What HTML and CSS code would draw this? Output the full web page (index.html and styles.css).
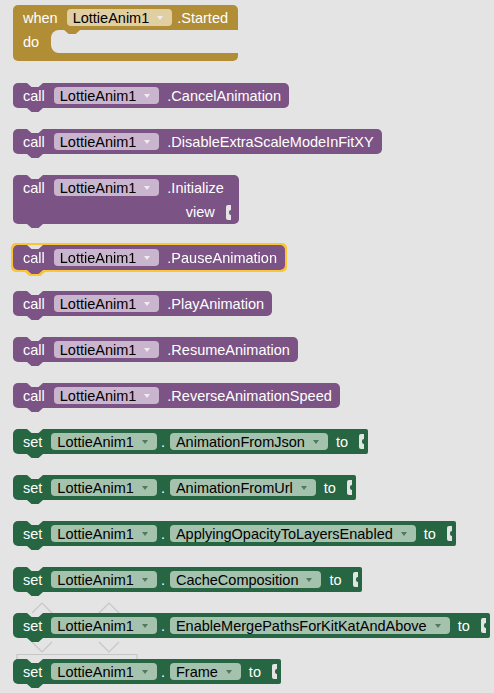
FILE: index.html
```html
<!DOCTYPE html>
<html>
<head>
<meta charset="utf-8">
<link rel="stylesheet" href="styles.css">
</head>
<body>
<div class="workspace">
  <div class="block event">
    <div class="row">
      <span class="label">when</span>
      <span class="pill">LottieAnim1<i class="arrow"></i></span>
      <span class="label">.Started</span>
    </div>
    <div class="row do-row">
      <span class="label">do</span>
      <span class="slot"></span>
    </div>
    <div class="bar"></div>
  </div>

  <div class="block call">
    <div class="row"><span class="label">call</span><span class="pill">LottieAnim1<i class="arrow"></i></span><span class="label">.CancelAnimation</span></div>
  </div>
  <div class="block call">
    <div class="row"><span class="label">call</span><span class="pill">LottieAnim1<i class="arrow"></i></span><span class="label">.DisableExtraScaleModeInFitXY</span></div>
  </div>
  <div class="block call init">
    <div class="row first"><span class="label">call</span><span class="pill">LottieAnim1<i class="arrow"></i></span><span class="label">.Initialize</span></div>
    <div class="row second"><span class="label">view</span><span class="socket"></span></div>
  </div>
  <div class="block call selected">
    <div class="row"><span class="label">call</span><span class="pill">LottieAnim1<i class="arrow"></i></span><span class="label">.PauseAnimation</span></div>
  </div>
  <div class="block call">
    <div class="row"><span class="label">call</span><span class="pill">LottieAnim1<i class="arrow"></i></span><span class="label">.PlayAnimation</span></div>
  </div>
  <div class="block call">
    <div class="row"><span class="label">call</span><span class="pill">LottieAnim1<i class="arrow"></i></span><span class="label">.ResumeAnimation</span></div>
  </div>
  <div class="block call">
    <div class="row"><span class="label">call</span><span class="pill">LottieAnim1<i class="arrow"></i></span><span class="label">.ReverseAnimationSpeed</span></div>
  </div>

  <div class="block set">
    <div class="row"><span class="label">set</span><span class="pill">LottieAnim1<i class="arrow"></i></span><span class="dot">.</span><span class="pill">AnimationFromJson<i class="arrow"></i></span><span class="label">to</span><span class="socket"></span></div>
  </div>
  <div class="block set">
    <div class="row"><span class="label">set</span><span class="pill">LottieAnim1<i class="arrow"></i></span><span class="dot">.</span><span class="pill">AnimationFromUrl<i class="arrow"></i></span><span class="label">to</span><span class="socket"></span></div>
  </div>
  <div class="block set">
    <div class="row"><span class="label">set</span><span class="pill">LottieAnim1<i class="arrow"></i></span><span class="dot">.</span><span class="pill">ApplyingOpacityToLayersEnabled<i class="arrow"></i></span><span class="label">to</span><span class="socket"></span></div>
  </div>
  <div class="block set">
    <div class="row"><span class="label">set</span><span class="pill">LottieAnim1<i class="arrow"></i></span><span class="dot">.</span><span class="pill">CacheComposition<i class="arrow"></i></span><span class="label">to</span><span class="socket"></span></div>
  </div>
  <div class="block set">
    <div class="row"><span class="label">set</span><span class="pill">LottieAnim1<i class="arrow"></i></span><span class="dot">.</span><span class="pill">EnableMergePathsForKitKatAndAbove<i class="arrow"></i></span><span class="label">to</span><span class="socket"></span></div>
  </div>
  <div class="block set">
    <div class="row"><span class="label">set</span><span class="pill">LottieAnim1<i class="arrow"></i></span><span class="dot">.</span><span class="pill">Frame<i class="arrow"></i></span><span class="label">to</span><span class="socket"></span></div>
  </div>

  <svg class="ghost" width="494" height="693" viewBox="0 0 494 693">
    <polyline points="32,613 42,603 52,613"/>
    <polyline points="99,613 109,603 119,613"/>
    <polyline points="32,642 42,652 52,642"/>
    <polyline points="99,642 109,652 119,642"/>
    <polyline points="17,660 17,654.5 137,654.5 137,660"/>
  </svg>
</div>
</body>
</html>
```

FILE: styles.css
```css
html, body {
  margin: 0;
  padding: 0;
  background: #e4e4e4;
}
body {
  font-family: "Liberation Sans", Arial, sans-serif;
  font-size: 14.5px;
  width: 494px;
  height: 693px;
  overflow: hidden;
}
.workspace {
  position: relative;
  display: flex;
  flex-direction: column;
  align-items: flex-start;
  padding: 5px 0 0 13px;
}
.block {
  position: relative;
  color: #fff;
  border-radius: 5px;
  z-index: 1;
}
.block + .block { margin-top: 21px; }
.event + .block { margin-top: 22px; }

.row {
  display: flex;
  align-items: center;
  gap: 8px;
  height: 25px;
  padding: 0 10px 0 10px;
  white-space: nowrap;
}
.label { line-height: 16px; }
.label:first-child { margin-right: 1px; }

.pill {
  display: flex;
  align-items: center;
  height: 17px;
  padding: 0 9px 0 6px;
  border-radius: 4px;
  color: #000;
  line-height: 16px;
}
.arrow {
  display: block;
  width: 0;
  height: 0;
  margin-left: 8px;
  border-left: 3px solid transparent;
  border-right: 3px solid transparent;
  border-top: 4px solid #eee;
}
.dot { margin: 0 -3px 0 -4px; }

.socket {
  position: relative;
  width: 5px;
  height: 15px;
  margin-left: 3px;
  background: #e4e4e4;
  border-radius: 2px 0 0 2px;
}
.socket::after {
  content: "";
  position: absolute;
  right: 0;
  top: 5px;
  width: 2px;
  height: 5px;
  border-radius: 2px 0 0 2px;
}
.set .row, .init .second { padding-right: 4px; }

/* connection notches */
.call::before, .set::before {
  content: "";
  position: absolute;
  top: 0;
  left: 14px;
  width: 16px;
  height: 4px;
  background: #e4e4e4;
  clip-path: polygon(0 0, 100% 0, 72% 100%, 28% 100%);
}
.call::after, .set::after {
  content: "";
  position: absolute;
  top: 100%;
  left: 14px;
  width: 16px;
  height: 4px;
  clip-path: polygon(0 0, 100% 0, 72% 100%, 28% 100%);
}

/* event block */
.event { background: #b18e35; }
.event .pill { background: #e0cfa3; }
.event .row:first-child .label:last-child { margin-left: -3px; }
.do-row { height: 23px; padding-right: 0; }
.do-row .label { margin-right: 4px; }
.slot {
  position: relative;
  flex: 1;
  align-self: stretch;
  background: #e4e4e4;
  border-radius: 8px 0 0 8px;
}
.slot::before {
  content: "";
  position: absolute;
  top: 0;
  left: 13px;
  width: 16px;
  height: 4px;
  background: #b18e35;
  clip-path: polygon(0 0, 100% 0, 72% 100%, 28% 100%);
}
.bar { height: 8px; }

/* call blocks */
.call { background: #7c5385; }
.call .row { padding-right: 8px; }
.call::after, .call .socket::after { background: #7c5385; }
.call .pill { background: #c9b5cd; }
.call .arrow { border-top-color: #f1ebf2; }
.init .first { padding-right: 15px; }
.init .second { justify-content: flex-end; height: 24px; gap: 7px; }

.selected {
  filter: drop-shadow(2px 0 0 #fbc534) drop-shadow(-2px 0 0 #fbc534) drop-shadow(0 2px 0 #fbc534) drop-shadow(0 -2px 0 #fbc534);
}

/* set blocks */
.set { background: #266643; border-radius: 5px 2px 2px 5px; }
.set::after, .set .socket::after { background: #266643; }
.set .pill { background: #a5c2ae; }
.set .arrow { border-top-color: #4f7a60; }

.ghost {
  position: absolute;
  left: 0;
  top: 0;
  z-index: 0;
  fill: none;
  stroke: #c6c6c6;
  stroke-width: 1.2;
}
```
